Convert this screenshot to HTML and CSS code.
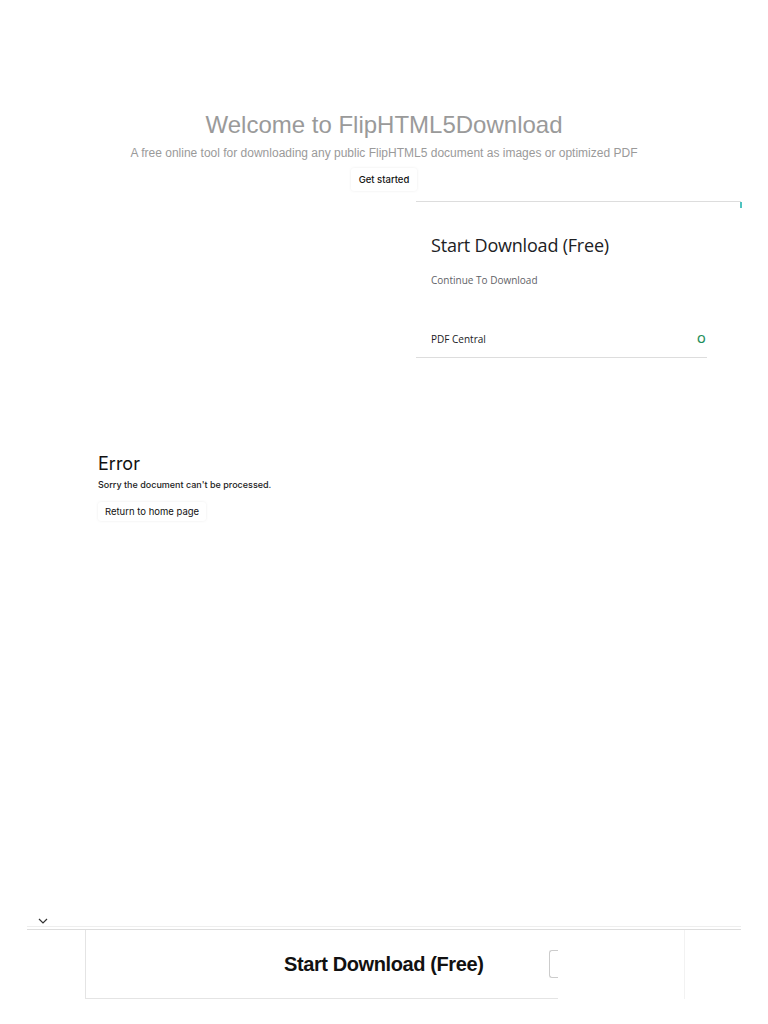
FILE: index.html
```html
<!DOCTYPE html>
<html lang="en">
	<head>
		<meta charset="UTF-8" />
		<meta name="viewport" content="width=device-width, initial-scale=1.0" />
		<title>FlipHTML5Download</title>
		<link rel="stylesheet" href="styles.css">
	</head>
	<body>
		<div class="hero">
			<h1>Welcome to FlipHTML5Download</h1>
			<p>A free online tool for downloading any public FlipHTML5 document as images or optimized PDF</p>
			<a href="#" class="btn">Get started</a>
		</div>

		<div class="ad-card">
			<div class="ad-top"><span class="ad-mark"></span></div>
			<h2>Start Download (Free)</h2>
			<p class="ad-sub">Continue To Download</p>
			<div class="ad-row">
				<span>PDF Central</span>
				<span class="ad-open">O</span>
			</div>
		</div>

		<div class="error">
			<h3>Error</h3>
			<p>Sorry the document can't be processed.</p>
			<a href="#" class="btn btn-small">Return to home page</a>
		</div>

		<div class="anchor-bar">
			<div class="anchor-toggle">
				<svg width="10" height="6" viewBox="0 0 10 6"><path d="M1 1l4 4 4-4" fill="none" stroke="#333" stroke-width="1.2"/></svg>
			</div>
			<div class="anchor-line"></div>
			<div class="anchor-body">
				<div class="anchor-ad">
					<span>Start Download (Free)</span>
					<span class="anchor-btn"></span>
				</div>
				<div class="anchor-side"></div>
			</div>
		</div>
	</body>
</html>
```

FILE: styles.css
```css
body {
	margin: 0;
	padding: 0;
	background: #fff;
	font-family: "Liberation Sans", Arial, sans-serif;
	color: #222;
}
.hero {
	padding-top: 111px;
	text-align: center;
}
.hero h1 {
	margin: 0;
	font-size: 24px;
	font-weight: normal;
	color: #9a9a9a;
	line-height: 28px;
}
.hero p {
	margin: 6px 0 0;
	font-size: 12px;
	color: #9a9a9a;
	line-height: 16px;
}
.btn {
	display: inline-block;
	font-family: Inter, "Liberation Sans", sans-serif;
	font-size: 9.5px;
	font-weight: 500;
	color: #111;
	text-decoration: none;
	background: #fff;
	padding: 6px 8px;
	border-radius: 3px;
	box-shadow: 0 0 3px rgba(0, 0, 0, 0.08);
}
.hero .btn {
	margin-top: 7px;
}
.ad-card {
	margin: 10px 0 0 416px;
	width: 325px;
}
.ad-top {
	height: 7px;
	border-top: 1px solid #ddd;
	position: relative;
}
.ad-mark {
	position: absolute;
	right: -1px;
	top: 0;
	width: 2px;
	height: 6px;
	background: #4fc3c0;
}
.ad-card h2 {
	margin: 25px 0 0 15px;
	font-family: "Open Sans", sans-serif;
	font-size: 18px;
	font-weight: 500;
	color: #202124;
	line-height: 22px;
	letter-spacing: -0.2px;
}
.ad-sub {
	margin: 17px 0 0 15px;
	font-family: "Open Sans", sans-serif;
	font-size: 10px;
	color: #5f6368;
	line-height: 14px;
}
.ad-row {
	display: flex;
	justify-content: space-between;
	width: 291px;
	margin-top: 39px;
	padding: 6px 0 11px 15px;
	box-sizing: border-box;
	border-bottom: 1px solid #ddd;
	font-family: "Open Sans", sans-serif;
	font-size: 10px;
	color: #202124;
	line-height: 14px;
	overflow: hidden;
}
.ad-open {
	color: #1e8e5a;
	font-weight: 600;
	font-size: 11px;
	width: 10px;
	overflow: hidden;
}
.error {
	margin: 95px 0 0 98px;
}
.error h3 {
	margin: 0;
	font-family: Inter, "Liberation Sans", sans-serif;
	font-size: 18px;
	font-weight: 400;
	line-height: 22px;
	color: #111;
}
.error p {
	margin: 4px 0 0;
	font-family: Inter, "Liberation Sans", sans-serif;
	font-size: 9px;
	font-weight: 500;
	color: #222;
	line-height: 12px;
}
.btn-small {
	margin-top: 11px;
	font-size: 9.5px;
	font-weight: 400;
	padding: 4px 7px;
}
.anchor-bar {
	margin-top: 397px;
}
.anchor-toggle {
	margin-left: 38px;
	height: 8px;
	line-height: 0;
}
.anchor-line {
	margin: 0 27px;
	height: 2px;
	border-top: 1px solid #eee;
	border-bottom: 1px solid #ddd;
}
.anchor-body {
	display: flex;
	margin-left: 85px;
}
.anchor-ad {
	box-sizing: border-box;
	width: 473px;
	height: 69px;
	border-left: 1px solid #e4e4e4;
	border-bottom: 1px solid #e4e4e4;
	display: flex;
	align-items: center;
	justify-content: space-between;
	padding-left: 198px;
	font-family: "Liberation Sans", Arial, sans-serif;
	font-size: 20px;
	font-weight: bold;
	color: #111;
	letter-spacing: -0.4px;
}
.anchor-btn {
	width: 8px;
	height: 26px;
	border: 1px solid #ccc;
	border-right: none;
	border-radius: 3px 0 0 3px;
}
.anchor-side {
	width: 126px;
	height: 69px;
	border-right: 1px solid #f2f2f2;
}
```
